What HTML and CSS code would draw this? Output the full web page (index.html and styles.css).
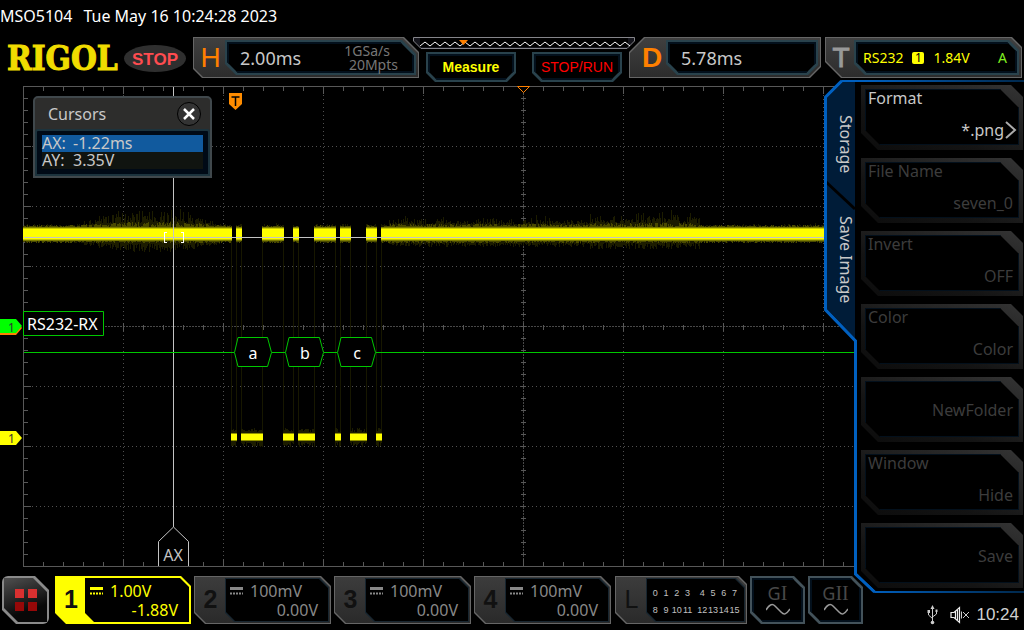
FILE: index.html
```
<!DOCTYPE html>
<html lang="en">
  <head>
    <meta charset="UTF-8" />
    <meta name="viewport" content="width=device-width, initial-scale=1" />
    <title>MSO5104</title>
    <link rel="stylesheet" href="styles.css">
  </head>
  <body>
    <div class="instrument">
      <div class="titlebar"><span>MSO5104</span><span>Tue May 16 10:24:28 2023</span></div>

      <header class="header">
        <div class="logo">RIGOL</div>
        <div class="run-state">STOP</div>

        <button class="cut box box-h" type="button">
          <span class="box-letter">H</span>
          <span class="cut screen">
            <span class="big">2.00ms</span>
            <span class="memory"><span>1GSa/s</span><span>20Mpts</span></span>
          </span>
        </button>

        <div class="center">
          <svg class="strip" viewBox="0 0 222 12" preserveAspectRatio="none">
            <path d="M0.5 0.5H221.5V4L214 11.5H8L0.5 4Z" fill="#15151c" stroke="#85858a" />
            <path d="M7 1H215V10H7Z" fill="#000" />
            <path id="strip-wave" fill="none" stroke="#fff" />
            <path d="M46 3H55L50.500 8Z" fill="#ff8000" />
          </svg>
          <div class="center-buttons">
            <button class="cut key key-measure" type="button">Measure</button>
            <button class="cut key key-run" type="button">STOP/RUN</button>
          </div>
        </div>

        <button class="cut box box-d" type="button">
          <span class="box-letter bold">D</span>
          <span class="cut screen"><span class="big">5.78ms</span></span>
        </button>

        <button class="cut box box-t" type="button">
          <span class="box-letter">T</span>
          <span class="cut screen trigger">
            <span>RS232</span>
            <span class="badge">1</span>
            <span>1.84V</span>
            <span class="auto">A</span>
          </span>
        </button>
      </header>

      <main class="scope">
        <svg class="graticule" viewBox="0 80 1024 490" preserveAspectRatio="xMinYMin slice">
          <g shape-rendering="crispEdges" fill="none">
            <path id="grid-dots" stroke="#505050" stroke-dasharray="1 3" />
            <path id="grid-axes" stroke="#484848" stroke-dasharray="2 1" />
            <path id="grid-ticks" stroke="#585858" />
            <path id="edges" stroke="#171700" />
            <path id="noise-far" stroke="#1c1c00" />
            <path id="noise-near" stroke="#4a4a00" />
            <g id="trace"></g>
            <path d="M24 237.500H824M173.500 87V527" stroke="#c4c4c4" />
            <path d="M167 232.500H164.500V242.500H167M181 232.500H183.500V242.500H181" stroke="#fff" />
            <path d="M24 352.500H234M272 352.500H285M324 352.500H337M376 352.500H856" stroke="#00c800" />
          </g>

          <g fill="#000" stroke="#00c800">
            <path d="M234.500 352.500L238 337.500H267.500L271.500 352.500L267.500 366.500H238Z" />
            <path d="M285.500 352.500L289 337.500H319.500L323.500 352.500L319.500 366.500H289Z" />
            <path d="M337.500 352.500L341 337.500H371.500L375.500 352.500L371.500 366.500H341Z" />
            <path d="M23.500 311.500H103.500V335.500H23.500Z" />
          </g>
          <g class="decode">
            <text x="253" y="359" text-anchor="middle">a</text>
            <text x="305" y="359" text-anchor="middle">b</text>
            <text x="357" y="359" text-anchor="middle">c</text>
            <text x="27" y="330">RS232-RX</text>
          </g>

          <path d="M0 320H16L22 328L16 335H0Z" fill="#ff8000" />
          <path d="M0 319H16L22 326L16 333H0Z" fill="#00ff00" />
          <path d="M0 431H16L22 438L16 445H0Z" fill="#ffff00" />
          <g class="flag">
            <text x="8" y="332">1</text>
            <text x="8" y="443">1</text>
          </g>

          <path d="M158.500 566V541.500L173.500 527L188.500 541.500V566" fill="#000" stroke="#c4c4c4" />
          <text class="cursor-name" x="173" y="561" text-anchor="middle">AX</text>

          <path d="M229 93H242V104L235.500 110L229 104Z" fill="#ff8c00" />
          <path d="M231.500 97H239.500M235.500 97V106" stroke="#000" stroke-width="1.500" />
          <path d="M517.500 86.500H529.500L523.500 92.500Z" fill="#000" stroke="#ff8000" />
        </svg>

        <section class="cursors">
          <div class="cursors-head">
            <h2>Cursors</h2>
            <button class="close" type="button" aria-label="Close">
              <svg width="12" height="12" viewBox="0 0 12 12"><path d="M1 1L11 11M11 1L1 11" stroke="#fff" stroke-width="2.500" /></svg>
            </button>
          </div>
          <div class="readout">
            <div class="row selected"><span>AX:</span><span>-1.22ms</span></div>
            <div class="row"><span>AY:</span><span>3.35V</span></div>
          </div>
        </section>
      </main>

      <aside class="panel">
        <svg class="panel-frame" viewBox="0 0 200 514" preserveAspectRatio="none">
          <defs>
            <linearGradient id="fade" x1="0" x2="1">
              <stop offset="0.200" stop-color="#0060c0" />
              <stop offset="1" stop-color="#00284c" />
            </linearGradient>
          </defs>
          <path d="M18 1H200V512H52L32 494V261L1 230V17Z" fill="#000" />
          <path d="M18 1H31V262L1 231V17Z" fill="#001c38" />
          <path d="M1 101L31 129" stroke="#000" stroke-width="3" />
          <path d="M200 1H18L2 17V230L32 261V494L51 512H200" fill="none" stroke="url(#fade)" stroke-width="2" />
          <path d="M18 1L2 17V230L32 261V494L51 512" transform="translate(-0.500 0)" fill="none" stroke="#0060c0" stroke-width="3" />
        </svg>
        <nav class="tabs">
          <button class="tab" type="button">Storage</button>
          <button class="tab" type="button">Save Image</button>
        </nav>
        <div class="menu">
          <button class="cut item" type="button">
            <span class="label">Format</span>
            <span class="value">*.png<svg class="chevron" width="12" height="20" viewBox="0 0 12 20"><path d="M1 2L10 10L1 18" fill="none" stroke="#aaa" stroke-width="2" /></svg></span>
          </button>
          <button class="cut item" type="button" disabled><span class="label">File Name</span><span class="value">seven_0</span></button>
          <button class="cut item" type="button" disabled><span class="label">Invert</span><span class="value">OFF</span></button>
          <button class="cut item" type="button" disabled><span class="label">Color</span><span class="value">Color</span></button>
          <button class="cut item" type="button" disabled><span class="value">NewFolder</span></button>
          <button class="cut item" type="button" disabled><span class="label">Window</span><span class="value">Hide</span></button>
          <button class="cut item" type="button" disabled><span class="value">Save</span></button>
        </div>
      </aside>

      <footer class="footer">
        <button class="cut home" type="button" aria-label="Menu">
          <svg width="22" height="22" viewBox="0 0 22 22">
            <path d="M0 0H9V9H0ZM13 0H22V9H13Z" fill="#d93030" />
            <path d="M0 13H9V22H0ZM13 13H22V22H13Z" fill="#960808" />
          </svg>
        </button>
        <button class="cut channel active" type="button">
          <span class="number">1</span>
          <span class="cut settings">
            <svg class="dc" width="13" height="8" viewBox="0 0 13 8"><path d="M0 1.500H13" stroke="currentColor" stroke-width="3" /><path d="M0 6.500H13" stroke="currentColor" stroke-width="2" stroke-dasharray="2 1" /></svg>
            <span class="scale">1.00V</span><span class="offset">-1.88V</span>
          </span>
        </button>
        <button class="cut channel" type="button">
          <span class="number">2</span>
          <span class="cut settings">
            <svg class="dc" width="13" height="8" viewBox="0 0 13 8"><path d="M0 1.500H13" stroke="currentColor" stroke-width="3" /><path d="M0 6.500H13" stroke="currentColor" stroke-width="2" stroke-dasharray="2 1" /></svg>
            <span class="scale">100mV</span><span class="offset">0.00V</span>
          </span>
        </button>
        <button class="cut channel" type="button">
          <span class="number">3</span>
          <span class="cut settings">
            <svg class="dc" width="13" height="8" viewBox="0 0 13 8"><path d="M0 1.500H13" stroke="currentColor" stroke-width="3" /><path d="M0 6.500H13" stroke="currentColor" stroke-width="2" stroke-dasharray="2 1" /></svg>
            <span class="scale">100mV</span><span class="offset">0.00V</span>
          </span>
        </button>
        <button class="cut channel" type="button">
          <span class="number">4</span>
          <span class="cut settings">
            <svg class="dc" width="13" height="8" viewBox="0 0 13 8"><path d="M0 1.500H13" stroke="currentColor" stroke-width="3" /><path d="M0 6.500H13" stroke="currentColor" stroke-width="2" stroke-dasharray="2 1" /></svg>
            <span class="scale">100mV</span><span class="offset">0.00V</span>
          </span>
        </button>
        <button class="cut channel logic" type="button">
          <span class="number thin">L</span>
          <span class="cut settings digits">
            <span>0</span><span>1</span><span>2</span><span>3</span><span>4</span><span>5</span><span>6</span><span>7</span>
            <span>8</span><span>9</span><span>10</span><span>11</span><span>12</span><span>13</span><span>14</span><span>15</span>
          </span>
        </button>
        <button class="cut generator" type="button">
          <span>G<span class="numeral">I</span></span>
          <svg width="24" height="13" viewBox="0 0 24 13"><path d="M0 7C3 2 6 0 9 3L15 9C18 12 20 12 24 6" fill="none" stroke="#999" stroke-width="1.500" /></svg>
        </button>
        <button class="cut generator" type="button">
          <span>G<span class="numeral">II</span></span>
          <svg width="24" height="13" viewBox="0 0 24 13"><path d="M0 7C3 2 6 0 9 3L15 9C18 12 20 12 24 6" fill="none" stroke="#999" stroke-width="1.500" /></svg>
        </button>
        <div class="status">
          <svg width="11" height="20" viewBox="0 0 11 20">
            <path d="M5.500 2V17M1.500 7V10L5.500 13.500M9.500 6V9L5.500 12" fill="none" stroke="#ccc" />
            <path d="M5.500 0L7.500 4H3.500ZM0.500 5H3V8H0.500ZM8.500 4.500H10.500V7H8.500Z" fill="#ccc" />
            <circle cx="5.500" cy="17.500" r="1.800" fill="#ccc" />
          </svg>
          <svg width="20" height="18" viewBox="0 0 20 18">
            <path d="M1 6.500H4L9.500 1.500V16.500L4 11.500H1ZM5.500 5.500V12.500M7.500 4V14" fill="none" stroke="#eee" stroke-width="1.200" />
            <path d="M11.500 5.500V12.500M13 6L19 12M19 6L13 12" fill="none" stroke="#ccc" />
          </svg>
          <span>10:24</span>
        </div>
      </footer>
    </div>
    <script src="script.js"></script>
  </body>
</html>
```
FILE: styles.css
```
:root {
  --teal: #29424c;
  --navy: #03101c;
  --ui: 'Noto Sans', sans-serif;
  --sans: 'Liberation Sans', sans-serif;
}

* {
  box-sizing: border-box;
}

body {
  margin: 0;
  background: #000;
  color: #c8c8c8;
  font: 16px/20px var(--ui);
}

button {
  padding: 0;
  border: 0;
  background: none;
  color: inherit;
  font: inherit;
  text-align: left;
}

.instrument {
  display: grid;
  grid-template-columns: 1fr 200px;
  grid-template-rows: 32px 48px 490px 60px;
}

/* box with cut corners, drawn as a rim with a face on top of it */
.cut {
  --tl: 0px;
  --tr: 0px;
  --br: 0px;
  --bl: 0px;
  position: relative;
  z-index: 0;
  background: #666;
}

.cut::before {
  content: '';
  position: absolute;
  inset: 1px;
  z-index: -1;
  background: #000;
}

.cut,
.cut::before {
  clip-path: polygon(var(--tl) 0, calc(100% - var(--tr)) 0, 100% var(--tr), 100% calc(100% - var(--br)), calc(100% - var(--br)) 100%, var(--bl) 100%, 0 calc(100% - var(--bl)), 0 var(--tl));
}

.titlebar {
  grid-column: 1 / -1;
  display: flex;
  gap: 11px;
  line-height: 32px;
  color: #fff;
}

/* header */
.header {
  grid-column: 1 / -1;
  display: flex;
  align-items: flex-start;
  padding: 5px 2px 0 7px;
}

.logo {
  width: 117px;
  color: #f0dc00;
  font: bold 33px/43px 'DejaVu Serif Condensed', 'DejaVu Serif', serif;
  -webkit-text-stroke: 1px #f0dc00;
}

.run-state {
  width: 62px;
  height: 27px;
  margin: 8px 7px 0 0;
  border-radius: 50%;
  background: #2f2f2f;
  color: #ff4c50;
  font: bold 17px/29px var(--sans);
  text-align: center;
}

.box {
  display: flex;
  height: 41px;
  padding: 3px;
}

.box::before {
  background: linear-gradient(#404040, #2c2c2c);
}

.box-h {
  --tr: 15px;
  --bl: 9px;
  flex: 1 1 226px;
}

.box-d {
  --tl: 15px;
  --br: 11px;
  flex: 1 1 192px;
  margin-right: 4px;
}

.box-t {
  --tr: 10px;
  --bl: 16px;
  flex: 1 1 197px;
}

.box-letter {
  width: 29px;
  color: #ff8000;
  font: 28px/35px var(--sans);
  text-align: center;
}

.box-d .box-letter {
  width: 34px;
  padding-left: 6px;
}

.box-t .box-letter {
  width: 26px;
  color: #999;
  -webkit-text-stroke: 1px #999;
}

.bold {
  font-weight: bold;
}

.screen {
  --bl: 11px;
  display: flex;
  flex: 1;
  justify-content: space-between;
  align-items: center;
  padding: 0 26px 0 15px;
  background: var(--teal);
}

.screen::before {
  inset: 2px;
  border: 2px solid var(--navy);
}

.box-h .screen {
  --tr: 14px;
  padding-right: 18px;
}

.box-d .screen {
  --br: 10px;
}

.box-t .screen {
  --tr: 10px;
}

.big {
  font-size: 18px;
}

.memory {
  display: flex;
  flex-direction: column;
  color: #777;
  font-size: 14px;
  line-height: 14px;
  text-align: right;
}

.memory span:first-child {
  padding-right: 8px;
}

.box-t .trigger {
  justify-content: flex-start;
  gap: 9px;
  padding: 0 12px 0 9px;
  color: #ff0;
  font-size: 14px;
}

.badge {
  width: 12px;
  border-radius: 2px;
  background: #ff0;
  color: #000;
  font-size: 12px;
  line-height: 12px;
  text-align: center;
}

.auto {
  margin-left: auto;
  color: #80f020;
}

.center {
  flex: 1 1 222px;
  margin: 0 -6px;
  z-index: 1;
}

.strip {
  display: block;
  width: 100%;
  height: 12px;
}

.center-buttons {
  display: flex;
  justify-content: space-between;
  gap: 16px;
  padding: 3px 13px 0;
}

.key {
  --br: 9px;
  --bl: 9px;
  flex: 0 1 90px;
  height: 30px;
  background: var(--teal);
  font: 14px/28px var(--sans);
  text-align: center;
}

.key::before {
  inset: 2px;
  border: 2px solid var(--navy);
}

.key-measure {
  color: #ff0;
  font-weight: bold;
}

.key-run {
  color: #f00;
}

/* scope */
.scope {
  grid-column: 1 / -1;
  grid-row: 3;
  position: relative;
}

.graticule {
  display: block;
  width: 100%;
  height: 490px;
}

.decode {
  fill: #fff;
}

.flag {
  fill: #333;
  font: 12px var(--ui);
}

.cursor-name {
  fill: #c4c4c4;
}

.cursors {
  position: absolute;
  left: 33px;
  top: 16px;
  width: 179px;
  border: 2px solid #40484c;
  border-radius: 5px 5px 0 0;
  background: #2d2d2c;
}

.cursors-head {
  display: flex;
  justify-content: space-between;
  align-items: center;
  height: 31px;
  padding: 0 9px 0 13px;
}

.cursors h2 {
  margin: 0;
  font-size: 16px;
  font-weight: normal;
}

.close {
  display: grid;
  place-items: center;
  width: 24px;
  height: 24px;
  border: 1px solid #000;
  border-radius: 50%;
  background: #333;
}

.readout {
  padding: 4px 5px 5px;
  border: 2px solid #1c333d;
  border-radius: 3px 3px 0 0;
  background: #000a16;
  line-height: 17px;
}

.row {
  display: flex;
  background: #101410;
}

.row span:first-child {
  width: 31px;
}

.selected {
  background: #115a9e;
}

/* soft key menu */
.panel {
  grid-column: 2;
  grid-row: 3 / 5;
  align-self: start;
  position: relative;
  z-index: 1;
  display: grid;
  grid-template-columns: 37px 1fr;
  padding: 5px 1px 6px 0;
}

.panel-frame {
  position: absolute;
  inset: 0;
  z-index: -1;
  width: 100%;
  height: 100%;
}

.tabs {
  display: flex;
  flex-direction: column;
  gap: 43px;
  padding: 30px 0 0 7px;
}

.tab {
  writing-mode: vertical-rl;
}

.menu {
  display: flex;
  flex-direction: column;
  gap: 8px;
}

.item {
  --tr: 12px;
  --bl: 17px;
  display: flex;
  flex-direction: column;
  justify-content: center;
  height: 65px;
  padding: 0 10px 0 7px;
  background: linear-gradient(200deg, #343434, #141414 65%, #0c0c0c);
}

.item::before {
  --tr: 19px;
  --bl: 15px;
  inset: 4px 4px 5px;
  border: 1px solid var(--navy);
}

.item .label {
  line-height: 25px;
}

.item .value {
  display: flex;
  justify-content: flex-end;
  align-items: center;
  line-height: 38px;
}

.item:disabled {
  color: #3c3c3c;
}

.chevron {
  margin: 0 -4px 0 1px;
}

/* channel bar */
.footer {
  grid-column: 1 / -1;
  grid-row: 4;
  display: flex;
  align-items: flex-start;
  gap: 3px;
  padding: 6px 4px 0 2px;
}

.home {
  --tr: 14px;
  --bl: 14px;
  display: grid;
  place-items: center;
  width: 47px;
  height: 48px;
  margin-right: 3px;
  border-radius: 6px;
  background: #8a8a8a;
}

.home::before {
  inset: 2px;
  background: linear-gradient(160deg, #505050, #080808 70%);
}

.channel {
  --tr: 10px;
  --bl: 11px;
  display: flex;
  width: 137px;
  height: 48px;
  padding: 2px;
  color: #888;
}

.channel::before {
  background: linear-gradient(#3c3c3c, #2a2a2a);
}

.number {
  width: 29px;
  color: #111;
  font: bold 25px/43px var(--sans);
  text-align: center;
}

.thin {
  font-weight: normal;
}

.settings {
  --bl: 9px;
  --tr: 9px;
  display: grid;
  grid-template-columns: 13px 1fr;
  column-gap: 7px;
  flex: 1;
  align-content: center;
  padding: 2px 11px 0 5px;
  background: #182630;
}

.dc {
  margin-top: 5px;
}

.scale {
  line-height: 19px;
}

.offset {
  grid-column: 1 / -1;
  line-height: 19px;
  text-align: right;
}

.active,
.active::before {
  background: #ff0;
}

.active {
  width: 136px;
  color: #ff0;
}

.active .number {
  width: 28px;
}

.active .settings {
  background: #000;
}

.logic {
  --tr: 8px;
  width: 132px;
  margin-left: 1px;
}

.digits {
  grid-template-columns: repeat(4, 1fr) 4px repeat(4, 1fr);
  column-gap: 0;
  row-gap: 1px;
  padding: 2px 5px 0 4px;
  color: #c0c0c0;
  font: 9px/16px var(--sans);
  text-align: center;
}

.digits span:nth-child(8n + 5) {
  grid-column: 6;
}

.generator {
  --tr: 11px;
  --bl: 11px;
  display: flex;
  flex-direction: column;
  align-items: center;
  width: 55px;
  height: 48px;
  padding-top: 7px;
  background: #43525a;
  color: #484848;
  font-size: 18px;
}

.generator::before {
  inset: 2px;
  border: 2px solid var(--navy);
}

.numeral {
  font-family: 'Liberation Serif', serif;
  font-size: 20px;
}

.status {
  display: flex;
  align-items: center;
  margin: 28px 1px 0 auto;
  color: #d0d0d0;
  font: 17px/22px var(--sans);
}

.status svg:first-child {
  margin-right: 12px;
}

.status span {
  margin-left: 6px;
}
```
FILE: script.js
```
(function() {
  const svgNS = 'http://www.w3.org/2000/svg';
  const set = (id, d) => document.getElementById(id).setAttribute('d', d);

  // small repeatable generator so the noise is the same on each load
  let seed = 7;
  function random() {
    seed = (seed * 16807) % 2147483647;
    return seed / 2147483647;
  }

  // memory strip
  let wave = 'M7 9';
  for (let x = 7; x < 211; x += 10) {
    wave += `L${x + 5} 5L${x + 10} 9`;
  }
  set('strip-wave', wave);

  // graticule: 100px by 60px divisions
  let dots = '';
  let ticks = 'M23.5 566V86.5H1024M23 566.5H1024';
  for (let x = 123; x < 1000; x += 100) {
    if (x !== 523) dots += `M${x}.5 87V566`;
  }
  for (let y = 146; y < 560; y += 60) {
    if (y !== 326) dots += `M24 ${y}.5H1024`;
  }
  for (let x = 43; x < 1000; x += 20) {
    const size = (x - 23) % 100 ? 4 : 7;
    ticks += `M${x}.5 87v${size}M${x}.5 566v-${size}M${x}.5 ${327 - size / 2 | 0}v${size + 1}`;
  }
  for (let y = 98; y < 560; y += 12) {
    const size = (y - 86) % 60 ? 4 : 7;
    ticks += `M24 ${y}.5h${size}M521 ${y}.5h5`;
  }
  set('grid-dots', dots);
  set('grid-axes', 'M24 326.5H1024M523.5 87V566');
  set('grid-ticks', ticks);

  const high = [[23, 232], [236, 242], [262, 284], [293, 299], [314, 336], [340, 351], [366, 377], [381, 824]];
  const low = [[231, 237], [241, 263], [283, 294], [298, 315], [335, 341], [350, 367], [376, 382]];

  function bars(list, y, height, color) {
    list.forEach(([from, to]) => {
      const rect = document.createElementNS(svgNS, 'rect');
      rect.setAttribute('x', from);
      rect.setAttribute('y', y);
      rect.setAttribute('width', to - from);
      rect.setAttribute('height', height);
      rect.setAttribute('fill', color);
      document.getElementById('trace').appendChild(rect);
    });
  }
  bars(high, 227, 14, '#7c7c00');
  bars(high, 228, 12, '#c8c800');
  bars(high, 229, 10, '#ffff00');
  bars(low, 433, 8, '#909000');
  bars(low, 434, 6, '#ffff00');

  let edges = '';
  low.forEach(([from, to]) => {
    edges += `M${from}.5 240V434M${to - 1}.5 240V434`;
  });
  set('edges', edges);

  function spread(x) {
    if (x > 80 && x < 220) return 5 + 13 * Math.sin((x - 80) / 140 * Math.PI);
    if (x > 388 && x < 590) return 9;
    if (x >= 590 && x < 700) return 13;
    return 3;
  }

  let far = '';
  let near = '';
  high.forEach(([from, to]) => {
    for (let x = from; x < to; x++) {
      const reach = spread(x);
      const up = Math.round(reach * (0.2 + random() * random() + random() * 0.2));
      const down = Math.round(reach * (0.15 + random() * 0.5));
      far += `M${x}.5 ${227 - up}V${241 + down}`;
      near += `M${x}.5 ${227 - Math.round(random() * (1 + reach / 4))}V${241 + Math.round(random() * 2)}`;
    }
  });
  low.forEach(([from, to]) => {
    for (let x = from; x < to; x++) {
      far += `M${x}.5 ${432 - Math.round(random() * 4)}V${442 + Math.round(random() * 5)}`;
    }
  });
  set('noise-far', far);
  set('noise-near', near);
})();
```
